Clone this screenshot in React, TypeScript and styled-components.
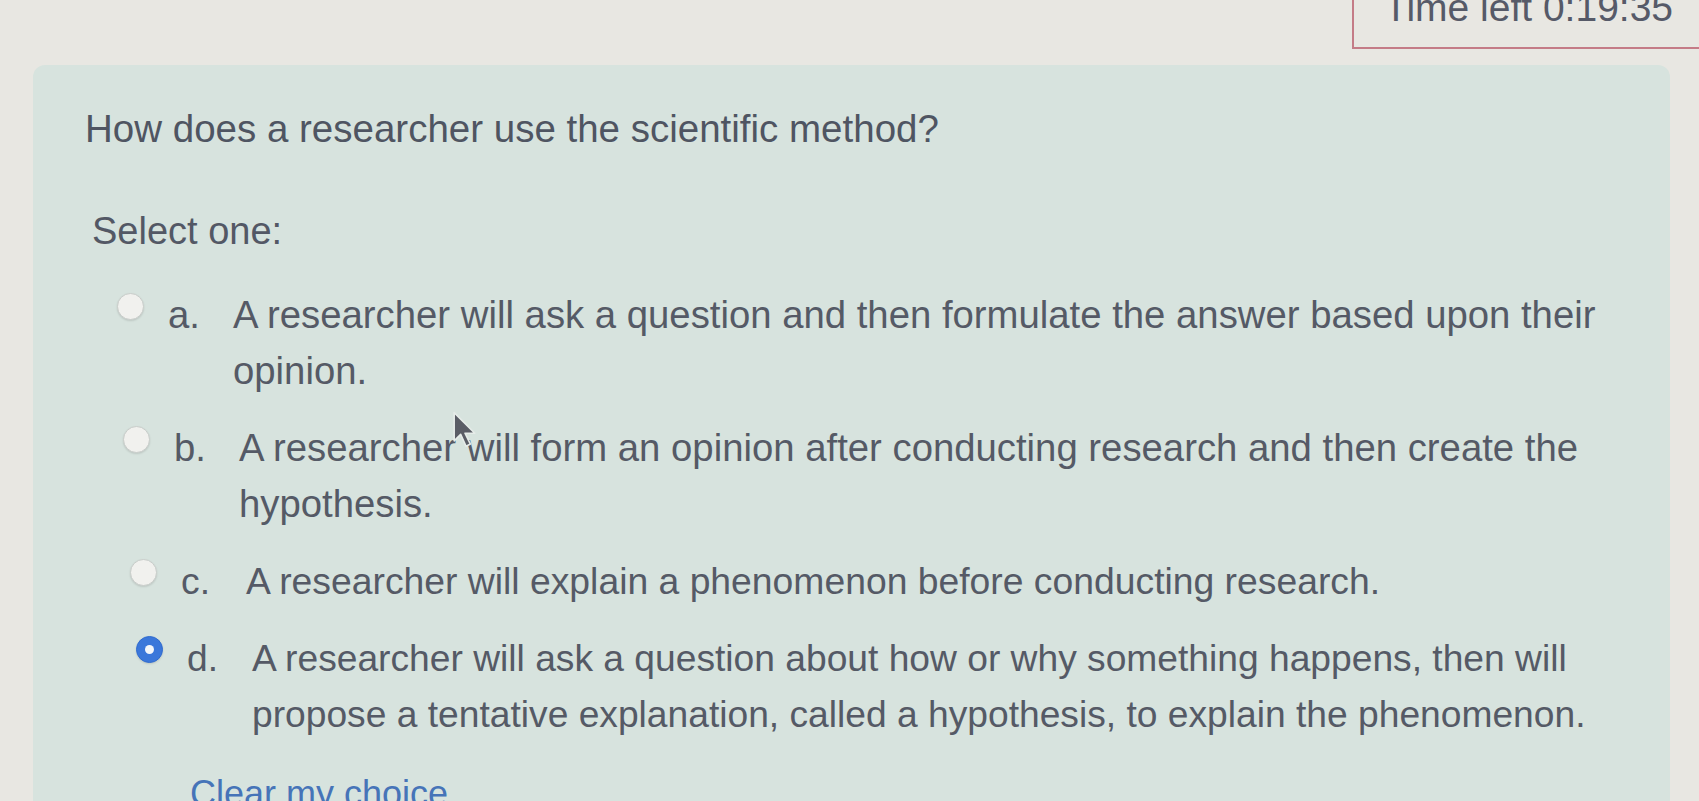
import React from "react";
import styled, { createGlobalStyle } from "styled-components";

const Global = createGlobalStyle`
  html, body { margin: 0; padding: 0; }
  body {
    background: #e8e7e2;
    font-family: "Liberation Sans", Arial, sans-serif;
    color: #555a66;
    overflow: hidden;
  }
`;

const Page = styled.div`
  width: 1699px;
  height: 801px;
  overflow: hidden;
  display: flex;
  flex-direction: column;
`;

const TopBar = styled.header`
  height: 65px;
  display: flex;
  justify-content: flex-end;
  align-items: flex-end;
  flex-shrink: 0;
`;

const TimerBox = styled.div`
  width: 347px;
  height: 66px;
  margin-bottom: 16px;
  padding-left: 30px;
  padding-bottom: 20px;
  border: 2px solid #c47c87;
  border-right: none;
  border-top: none;
  display: flex;
  align-items: flex-end;
  box-sizing: border-box;
  font-size: 39px;
  line-height: 39px;
  color: #565a68;
  white-space: nowrap;
`;

const Card = styled.main`
  position: relative;
  flex: 1;
  margin: 0 29px 0 33px;
  padding: 42px 30px 0 52px;
  background: #d7e3de;
  border-radius: 12px 12px 0 0;
`;

const Question = styled.h2`
  margin: 0;
  font-size: 38.5px;
  line-height: 44px;
  font-weight: 400;
  color: #4f5562;
`;

const Prompt = styled.div`
  margin-top: 58px;
  margin-left: 7px;
  font-size: 38px;
  line-height: 44px;
  color: #535865;
`;

const Options = styled.div`
  margin-top: 34px;
  padding-left: 32px;
  display: flex;
  flex-direction: column;
  gap: 21px;
`;

const Option = styled.label<{ $indent: number; $size: number }>`
  display: grid;
  grid-template-columns: 26px 40px 1400px;
  column-gap: 25px;
  padding-left: ${(p) => p.$indent}px;
  font-size: ${(p) => p.$size}px;
  line-height: 56px;
  color: #555a66;
`;

const Radio = styled.span<{ $checked?: boolean }>`
  margin-top: 6px;
  width: 27px;
  height: 27px;
  border-radius: 50%;
  box-sizing: border-box;
  display: flex;
  align-items: center;
  justify-content: center;
  background: ${(p) => (p.$checked ? "#3b77da" : "#f1f1ee")};
  border: 1px solid ${(p) => (p.$checked ? "#2f6bd0" : "#c9cdca")};
  box-shadow: 0 1px 2px rgba(0, 0, 0, 0.12);
  &::after {
    content: "";
    display: ${(p) => (p.$checked ? "block" : "none")};
    width: 9px;
    height: 9px;
    border-radius: 50%;
    background: #f4f6fa;
  }
`;

const Letter = styled.span``;

const Text = styled.span``;

const ClearLink = styled.a`
  display: block;
  margin-top: 24px;
  padding-left: 105px;
  font-size: 36px;
  line-height: 56px;
  color: #4674b8;
  text-decoration: none;
`;

const Cursor = styled.svg`
  position: absolute;
  left: 419px;
  top: 345px;
  width: 26px;
  height: 40px;
`;

const options = [
  {
    letter: "a.",
    text: "A researcher will ask a question and then formulate the answer based upon their opinion.",
    indent: 0,
    size: 38.3,
  },
  {
    letter: "b.",
    text: "A researcher will form an opinion after conducting research and then create the hypothesis.",
    indent: 6,
    size: 38.3,
  },
  {
    letter: "c.",
    text: "A researcher will explain a phenomenon before conducting research.",
    indent: 13,
    size: 37.3,
  },
  {
    letter: "d.",
    text: "A researcher will ask a question about how or why something happens, then will propose a tentative explanation, called a hypothesis, to explain the phenomenon.",
    indent: 19,
    size: 37.2,
    checked: true,
  },
];

export default function App() {
  return (
    <Page>
      <Global />
      <TopBar>
        <TimerBox>Time left 0:19:35</TimerBox>
      </TopBar>
      <Card>
        <Question>How does a researcher use the scientific method?</Question>
        <Prompt>Select one:</Prompt>
        <Options>
          {options.map((o) => (
            <Option key={o.letter} $indent={o.indent} $size={o.size}>
              <Radio $checked={o.checked} />
              <Letter>{o.letter}</Letter>
              <Text>{o.text}</Text>
            </Option>
          ))}
        </Options>
        <ClearLink href="#">Clear my choice</ClearLink>
        <Cursor viewBox="0 0 24 36">
          <path
            d="M2 2 L2 28 L8 22 L13 33 L17 31 L12 21 L21 21 Z"
            fill="#5a5d66"
            stroke="#e6ece9"
            strokeWidth="1.5"
            strokeLinejoin="round"
          />
        </Cursor>
      </Card>
    </Page>
  );
}
